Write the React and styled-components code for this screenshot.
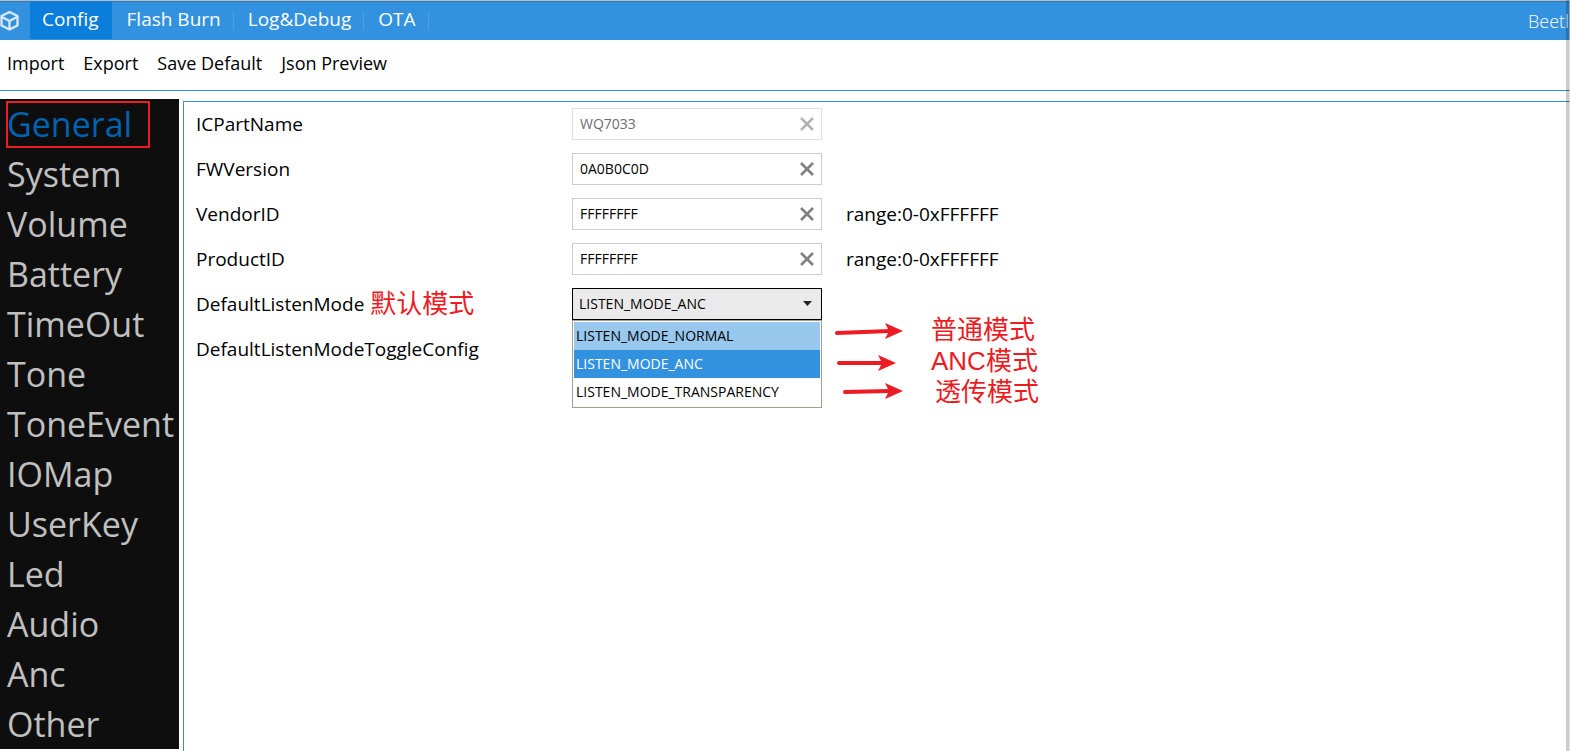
import React, { useState } from "react";
import styled, { createGlobalStyle } from "styled-components";

const GlobalStyle = createGlobalStyle`
  * { box-sizing: border-box; }
  body {
    margin: 0;
    background: #fff;
    color: #000;
    font-family: "Open Sans", "Noto Sans CJK SC", sans-serif;
    font-size: 18px;
    overflow: hidden;
  }
  button, input, select { font: inherit; color: inherit; }
`;

const Page = styled.div`
  position: relative;
  display: flex;
  flex-direction: column;
  min-height: 100vh;
`;

const Header = styled.header`
  display: flex;
  align-items: stretch;
  height: 40px;
  background: #3392df;
  border-top: 1px solid #b9bdc0;
  box-shadow: inset 0 1px 0 #2b7bbb;
  color: #fff;
  overflow: hidden;
`;

const Logo = styled.svg`
  flex: none;
  align-self: center;
  width: 20px;
  height: 20px;
  margin-right: 10px;
`;

const Tabs = styled.nav`
  display: flex;
  flex: 1;
  font-size: 19px;
`;

const Tab = styled.button`
  position: relative;
  height: 38px;
  padding: 0 13px 2px 14px;
  border: 0;
  background: ${(p) => (p.$active ? "#0b7dda" : "transparent")};
  white-space: nowrap;

  &:first-child { padding: 0 13px 2px 12px; margin-right: 1px; }

  &:not(:first-child)::after {
    content: "";
    position: absolute;
    right: 0;
    top: 10px;
    width: 1px;
    height: 19px;
    background: #4c9fe3;
  }
`;

const Device = styled.span`
  flex: none;
  width: 42px;
  line-height: 40px;
  font-weight: 300;
  white-space: nowrap;
`;

const Toolbar = styled.div`
  display: flex;
  gap: 19px;
  height: 51px;
  padding: 0 7px 4px;
  border-bottom: 1px solid #3392df;
`;

const ToolButton = styled.button`
  padding: 0;
  border: 0;
  background: none;
`;

const Body = styled.div`
  display: flex;
  flex: 1;
  gap: 4px;
  padding-top: 8px;
`;

const Sidebar = styled.nav`
  flex: none;
  align-self: flex-start;
  width: 179px;
  background: #0e0e0e;
`;

const SideLink = styled.a`
  position: relative;
  display: block;
  height: 50px;
  padding-left: 7px;
  line-height: 50px;
  font-size: 34px;
  color: ${(p) => (p.$active ? "#0063b1" : "#c0c0c0")};
  text-decoration: none;
`;

const Highlight = styled.span`
  position: absolute;
  inset: 2px 29px 1px 6px;
  border: 2px solid #ed1c24;
`;

const Panel = styled.main`
  flex: 1;
  margin-top: 2px;
  border: solid #3392df;
  border-width: 1px 0 0 1px;
`;

const Row = styled.div`
  display: flex;
  align-items: center;
  height: 45px;
  padding: 0 0 2px 12px;
  font-size: 19px;
`;

const LabelCell = styled.div`
  flex: none;
  display: flex;
  align-items: center;
  gap: 6px;
  width: 376px;
`;

const Note = styled.span`
  font-family: "Liberation Sans", "Noto Sans CJK SC", sans-serif;
  font-size: 26px;
  line-height: 30px;
  color: #ed1c24;
  white-space: nowrap;
`;

const Field = styled.div`
  position: relative;
  flex: none;
  width: 250px;
  height: 32px;
  font-size: 14px;
`;

const TextBox = styled.input`
  width: 100%;
  height: 100%;
  padding: 0 30px 0 7px;
  border: 1px solid #cccccc;
  background: #fff;
  outline: none;

  &:disabled { color: #6d6d6d; border-color: #e0e0e0; }
`;

const ClearButton = styled.button`
  position: absolute;
  top: 8px;
  right: 7px;
  width: 16px;
  height: 16px;
  padding: 0;
  border: 0;
  background: none;
  color: #808080;

  &:disabled { color: #b3b3b3; }
  svg { display: block; }
`;

const Hint = styled.span`
  margin-left: 24px;
`;

const Select = styled.select`
  appearance: none;
  width: 100%;
  height: 100%;
  padding: 0 30px 0 6px;
  border: 1px solid #000;
  border-radius: 0;
  background: #eaeaea;
  outline: none;
`;

const Caret = styled.svg`
  position: absolute;
  top: 13px;
  right: 9px;
  pointer-events: none;
`;

const Options = styled.ul`
  position: absolute;
  top: 100%;
  left: 0;
  right: 0;
  margin: 0;
  padding: 1px;
  border: 1px solid #a39e8f;
  background: #fff;
  list-style: none;
`;

const Option = styled.li`
  height: 28px;
  padding-left: 2px;
  line-height: 28px;
  background: ${(p) => (p.$selected ? "#3392df" : p.$hover ? "#99c8ef" : "#fff")};
  color: ${(p) => (p.$selected ? "#fff" : "#000")};
`;

const Annotations = styled.div`
  position: absolute;
  top: 27px;
  left: 263px;
`;

const Annotation = styled.div`
  display: flex;
  gap: 26px;
  height: 31px;
`;

const RightEdge = styled.div`
  position: absolute;
  top: 0;
  right: 0;
  bottom: 0;
  width: 4px;
  background: rgba(0, 0, 0, 0.2);
  border-right: 1px solid rgba(255, 255, 255, 0.4);
`;

const PAGES = [
  "General", "System", "Volume", "Battery", "TimeOut", "Tone", "ToneEvent",
  "IOMap", "UserKey", "Led", "Audio", "Anc", "Other",
];

const FIELDS = [
  { name: "ICPartName", value: "WQ7033", disabled: true },
  { name: "FWVersion", value: "0A0B0C0D" },
  { name: "VendorID", value: "FFFFFFFF", hint: "range:0-0xFFFFFF" },
  { name: "ProductID", value: "FFFFFFFF", hint: "range:0-0xFFFFFF" },
];

const MODES = [
  { id: "LISTEN_MODE_NORMAL", note: "普通模式", from: [2, 18], to: [68, 16], width: 70 },
  { id: "LISTEN_MODE_ANC", note: "ANC模式", from: [4, 17], to: [61, 17], width: 70 },
  { id: "LISTEN_MODE_TRANSPARENCY", note: "透传模式", from: [10, 15], to: [68, 14], width: 74 },
];

function Arrow({ from, to, width }) {
  const [x, y] = to;
  return (
    <svg width={width} height="31" aria-hidden="true">
      <path d={`M${from[0]} ${from[1]}L${x - 13} ${y}`} stroke="#ed1c24" strokeWidth="4" strokeLinecap="round" />
      <path d={`M${x} ${y}L${x - 18} ${y - 8}L${x - 14} ${y}L${x - 18} ${y + 8}Z`} fill="#ed1c24" />
    </svg>
  );
}

function TextField({ name, value, disabled, hint }) {
  const [text, setText] = useState(value);
  return (
    <Row>
      <LabelCell><label htmlFor={name}>{name}</label></LabelCell>
      <Field>
        <TextBox id={name} value={text} disabled={disabled} onChange={(e) => setText(e.target.value)} />
        <ClearButton type="button" aria-label={`Clear ${name}`} disabled={disabled} onClick={() => setText("")}>
          <svg width="16" height="16" viewBox="0 0 16 16">
            <path d="M2 2L14 14M14 2L2 14" stroke="currentColor" strokeWidth="2.6" />
          </svg>
        </ClearButton>
      </Field>
      {hint && <Hint>{hint}</Hint>}
    </Row>
  );
}

function ModeField() {
  const [mode, setMode] = useState("LISTEN_MODE_ANC");
  return (
    <Row>
      <LabelCell>
        <label htmlFor="mode">DefaultListenMode</label>
        <Note>默认模式</Note>
      </LabelCell>
      <Field>
        <Select id="mode" value={mode} onChange={(e) => setMode(e.target.value)}>
          {MODES.map((m) => <option key={m.id}>{m.id}</option>)}
        </Select>
        <Caret width="10" height="5" aria-hidden="true"><path d="M0 0H9L4.500 5Z" fill="#222" /></Caret>
        <Options role="listbox" aria-label="DefaultListenMode">
          {MODES.map((m, i) => (
            <Option key={m.id} role="option" aria-selected={m.id === mode} $selected={m.id === mode} $hover={i === 0} onClick={() => setMode(m.id)}>
              {m.id}
            </Option>
          ))}
        </Options>
        <Annotations>
          {MODES.map((m) => (
            <Annotation key={m.id}>
              <Arrow from={m.from} to={m.to} width={m.width} />
              <Note>{m.note}</Note>
            </Annotation>
          ))}
        </Annotations>
      </Field>
    </Row>
  );
}

export default function App() {
  return (
    <Page>
      <GlobalStyle />
      <Header>
        <Logo viewBox="0 0 20 20" fill="none" stroke="#dceaf6" strokeWidth="2.300" strokeLinejoin="round">
          <path d="M9.500 1L17.500 5V14.500L9.500 18.500L1.500 14.500V5Z" />
          <path d="M2 6L9.500 10L17 6M9.500 10V18" />
        </Logo>
        <Tabs>
          <Tab $active>Config</Tab>
          <Tab>Flash Burn</Tab>
          <Tab>Log&amp;Debug</Tab>
          <Tab>OTA</Tab>
        </Tabs>
        <Device>Beetl</Device>
      </Header>
      <Toolbar>
        <ToolButton>Import</ToolButton>
        <ToolButton>Export</ToolButton>
        <ToolButton>Save Default</ToolButton>
        <ToolButton>Json Preview</ToolButton>
      </Toolbar>
      <Body>
        <Sidebar>
          {PAGES.map((p, i) => (
            <SideLink key={p} href={`#${p}`} $active={i === 0}>
              {p}
              {i === 0 && <Highlight />}
            </SideLink>
          ))}
        </Sidebar>
        <Panel>
          {FIELDS.map((f) => <TextField key={f.name} {...f} />)}
          <ModeField />
          <Row><LabelCell>DefaultListenModeToggleConfig</LabelCell></Row>
        </Panel>
      </Body>
      <RightEdge />
    </Page>
  );
}
